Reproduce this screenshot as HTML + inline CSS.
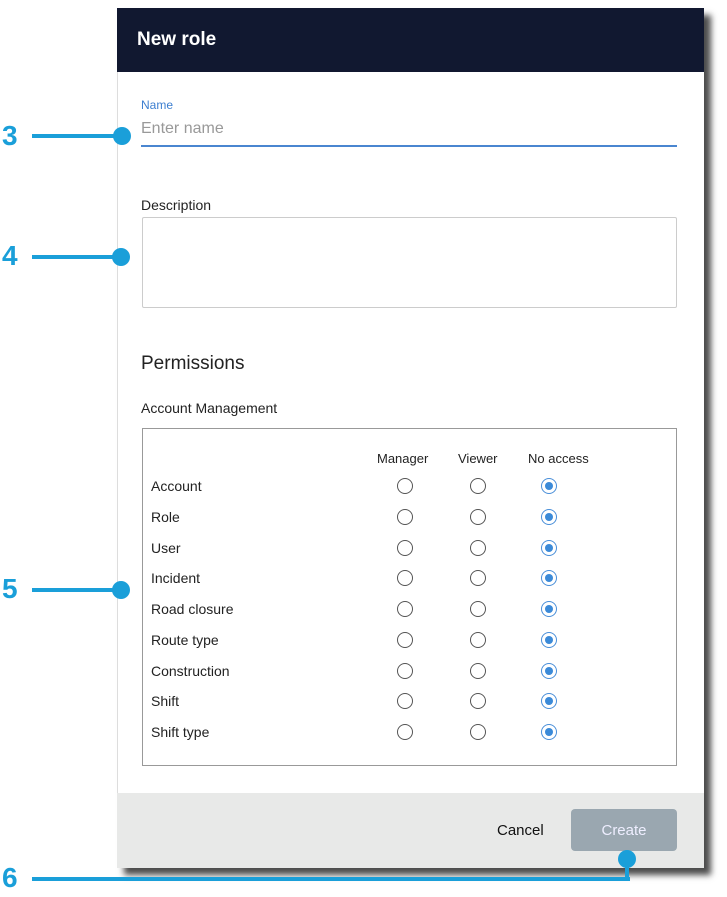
<!DOCTYPE html>
<html><head><style>
body{margin:0;width:727px;height:897px;background:#fff;position:relative;overflow:hidden;font-family:"Liberation Sans",sans-serif;}
.a{position:absolute}
.dlg{left:117px;top:8px;width:586px;height:860px;background:#fff;box-shadow:7px 7px 6px rgba(0,0,0,.7);border-left:1px solid #ddd;}
.hdr{left:117px;top:8px;width:587px;height:64px;background:#111830;color:#fff;font-size:19px;}
.lbl{font-size:14px;color:#222}
.r{width:14px;height:14px;border:1px solid #555;border-radius:50%;box-sizing:content-box}
.on{border-color:#4a8fd9;}
.on::after{content:"";position:absolute;left:3px;top:3px;width:8px;height:8px;border-radius:50%;background:#3b8ad8}
.line{background:#1a9fd9}
.dot{width:18px;height:18px;border-radius:50%;background:#1a9fd9}
.num{font-weight:bold;color:#1a9fd9;font-size:28px}
</style></head><body>
<div class="a dlg"></div>
<div class="a hdr"><span class="a" style="left:20px;top:21px;font-weight:600">New role</span></div>
<div class="a" style="left:141px;top:98px;font-size:12px;color:#3d7fd0">Name</div>
<div class="a" style="left:141px;top:120px;font-size:16px;color:#999">Enter name</div>
<div class="a" style="left:141px;top:145px;width:536px;height:2px;background:#4a86d0"></div>
<div class="a lbl" style="left:141px;top:197px">Description</div>
<div class="a" style="left:142px;top:217px;width:533px;height:89px;border:1px solid #ccc;border-radius:2px"></div>
<div class="a" style="left:141px;top:353px;font-size:19px;color:#222">Permissions</div>
<div class="a lbl" style="left:141px;top:400px">Account Management</div>
<div class="a" style="left:142px;top:428px;width:533px;height:336px;border:1px solid #999"></div>
<div class="a" style="left:377px;top:451px;font-size:13px;color:#222">Manager</div>
<div class="a" style="left:458px;top:451px;font-size:13px;color:#222">Viewer</div>
<div class="a" style="left:528px;top:451px;font-size:13px;color:#222">No access</div>
<div id="rows"></div>
<div class="a" style="left:117px;top:793px;width:587px;height:75px;background:#e8e9e8"></div>
<div class="a" style="left:497px;top:822px;font-size:15px;color:#111">Cancel</div>
<div class="a" style="left:571px;top:809px;width:106px;height:42px;background:#9aa7b0;border-radius:4px;color:#eef;font-size:15px;text-align:center;line-height:44px">Create</div>
<div class="a num" style="left:2px;top:120px">3</div>
<div class="a line" style="left:32px;top:134px;width:90px;height:4px"></div>
<div class="a dot" style="left:113px;top:127px"></div>
<div class="a num" style="left:2px;top:240px">4</div>
<div class="a line" style="left:32px;top:255px;width:90px;height:4px"></div>
<div class="a dot" style="left:112px;top:248px"></div>
<div class="a num" style="left:2px;top:573px">5</div>
<div class="a line" style="left:32px;top:588px;width:90px;height:4px"></div>
<div class="a dot" style="left:112px;top:581px"></div>
<div class="a num" style="left:2px;top:862px">6</div>
<div class="a line" style="left:32px;top:877px;width:598px;height:4px"></div>
<div class="a line" style="left:625px;top:860px;width:4px;height:20px"></div>
<div class="a dot" style="left:618px;top:850px"></div>
<script>
var n=["Account","Role","User","Incident","Road closure","Route type","Construction","Shift","Shift type"],h="";
n.forEach(function(t,i){var y=486+i*30.75;
h+='<div class="a lbl" style="left:151px;top:'+(y-8)+'px;font-size:14px">'+t+'</div>';
[405,478].forEach(function(x){h+='<div class="a r" style="left:'+(x-8)+'px;top:'+(y-8)+'px"></div>';});
h+='<div class="a r on" style="left:541px;top:'+(y-8)+'px"></div>';});
document.getElementById("rows").innerHTML=h;
</script>
</body></html>
